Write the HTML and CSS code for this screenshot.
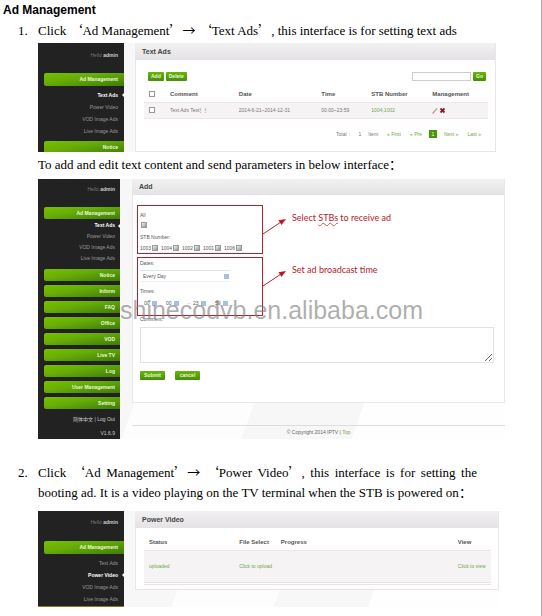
FILE: index.html
```html
<!DOCTYPE html>
<html lang="en">
<head>
    <meta charset="UTF-8">
    <meta name="viewport" content="width=device-width, initial-scale=1.0">
    <title>Ad Management</title>
    <link rel="stylesheet" href="styles.css">
</head>
<body>
    <div class="document">
        <h1>Ad Management</h1>

        <p class="step"><span class="step-number">1.</span>Click <span class="cjk">‘</span>Ad Management<span class="cjk">’→</span> <span class="cjk">‘</span>Text Ads<span class="cjk">’</span>, this interface is for setting text ads</p>

        <!-- Text ads list -->
        <div class="screen screen-list">
            <div class="sidebar">
                <div class="hello">Hello <b>admin</b></div>
                <a href="#" class="menu">Ad Management</a>
                <a href="#" class="sub active">Text Ads</a>
                <a href="#" class="sub">Power Video</a>
                <a href="#" class="sub">VOD Image Ads</a>
                <a href="#" class="sub">Live Image Ads</a>
                <a href="#" class="menu">Notice</a>
            </div>
            <div class="main">
                <div class="panel">
                    <h2>Text Ads</h2>
                    <div class="toolbar">
                        <button class="btn">Add</button>
                        <button class="btn">Delete</button>
                        <input type="text" class="search" aria-label="Search">
                        <button class="btn">Go</button>
                    </div>
                    <table class="ads-table">
                        <tr>
                            <th class="col-check"><input type="checkbox" aria-label="Select all"></th>
                            <th class="col-comment">Comment</th>
                            <th class="col-date">Date</th>
                            <th class="col-time">Time</th>
                            <th class="col-stb">STB Number</th>
                            <th>Management</th>
                        </tr>
                        <tr>
                            <td><input type="checkbox" aria-label="Select ad"></td>
                            <td>Text Ads Test！！</td>
                            <td>2014-6-21~2014-12-31</td>
                            <td>00:00~23:59</td>
                            <td><a href="#">1004,1002</a></td>
                            <td>
                                <svg class="icon" viewBox="0 0 14 7" aria-hidden="true">
                                    <path d="M1 6 L5 1.5" stroke="#d09a78" stroke-width="1.2"/>
                                    <path d="M0.6 6.5 L1.3 5.6" stroke="#777" stroke-width="1"/>
                                    <path d="M8.5 1.5 L12.5 5.5 M12.5 1.5 L8.5 5.5" stroke="#8c1c2c" stroke-width="1.8"/>
                                </svg>
                            </td>
                        </tr>
                    </table>
                    <div class="pager">
                        <span>Total：</span><span>1</span><span>Item</span>
                        <a href="#">« First</a>
                        <a href="#">« Pre</a>
                        <a href="#" class="current">1</a>
                        <a href="#">Next »</a>
                        <a href="#">Last »</a>
                    </div>
                </div>
            </div>
        </div>

        <p class="note">To add and edit text content and send parameters in below interface<span class="cjk">：</span></p>

        <!-- Add form -->
        <div class="screen screen-form">
            <div class="sidebar">
                <div class="hello">Hello <b>admin</b></div>
                <a href="#" class="menu">Ad Management</a>
                <a href="#" class="sub active">Text Ads</a>
                <a href="#" class="sub">Power Video</a>
                <a href="#" class="sub">VOD Image Ads</a>
                <a href="#" class="sub">Live Image Ads</a>
                <a href="#" class="menu">Notice</a>
                <a href="#" class="menu">Inform</a>
                <a href="#" class="menu">FAQ</a>
                <a href="#" class="menu">Office</a>
                <a href="#" class="menu">VOD</a>
                <a href="#" class="menu">Live TV</a>
                <a href="#" class="menu">Log</a>
                <a href="#" class="menu">User Management</a>
                <a href="#" class="menu">Setting</a>
                <div class="logout"><a href="#">简体中文</a> | <a href="#">Log Out</a></div>
                <div class="version">V1.6.9</div>
            </div>
            <div class="main">
                <div class="panel">
                    <h2>Add</h2>
                    <div class="form">
                        <div class="callout">
                            <div class="red-box box-stb">
                                <label for="all">All</label>
                                <input type="checkbox" id="all" checked>
                                <div class="label">STB Number:</div>
                                <div class="stb-list">
                                    <label>1003 <input type="checkbox" checked></label>
                                    <label>1004 <input type="checkbox" checked></label>
                                    <label>1002 <input type="checkbox" checked></label>
                                    <label>1001 <input type="checkbox" checked></label>
                                    <label>1006 <input type="checkbox" checked></label>
                                </div>
                            </div>
                            <svg class="arrow" viewBox="0 0 24 20" aria-hidden="true">
                                <path d="M0 18 L18 6" stroke="#b5202c" stroke-width="1"/>
                                <path d="M23 3 L15.5 4.2 L18.5 9 Z" fill="#c01722"/>
                            </svg>
                            <span class="callout-text">Select <span class="typo">STBs</span> to receive ad</span>
                        </div>
                        <div class="callout">
                            <div class="red-box box-time">
                                <label for="dates">Dates:</label>
                                <select id="dates" class="dates"><option>Every Day</option></select>
                                <div class="label">Times:</div>
                                <div class="times">
                                    <select aria-label="Start hour"><option>00</option></select>
                                    <select aria-label="Start minute"><option>00</option></select>
                                    <span>-</span>
                                    <select aria-label="End hour"><option>23</option></select>
                                    <select aria-label="End minute"><option>59</option></select>
                                </div>
                            </div>
                            <svg class="arrow" viewBox="0 0 24 20" aria-hidden="true">
                                <path d="M0 18 L18 6" stroke="#b5202c" stroke-width="1"/>
                                <path d="M23 3 L15.5 4.2 L18.5 9 Z" fill="#c01722"/>
                            </svg>
                            <span class="callout-text">Set ad broadcast time</span>
                        </div>
                        <label for="comment" class="comment-label">Comment:</label>
                        <textarea id="comment" class="comment"></textarea>
                        <div class="form-buttons">
                            <button class="btn">Submit</button>
                            <button class="btn">cancel</button>
                        </div>
                    </div>
                </div>
                <div class="footer">© Copyright 2014 IPTV | <a href="#">Top</a></div>
            </div>
            <div class="watermark">shinecodvb.en.alibaba.com</div>
        </div>

        <p class="step step-two"><span class="step-number">2.</span>Click <span class="cjk">‘</span>Ad Management<span class="cjk">’→</span> <span class="cjk">‘</span>Power Video<span class="cjk">’</span>, this interface is for setting the booting ad. It is a video playing on the TV terminal when the STB is powered on<span class="cjk">：</span></p>

        <!-- Power video list -->
        <div class="screen screen-video">
            <div class="sidebar">
                <div class="hello">Hello <b>admin</b></div>
                <a href="#" class="menu">Ad Management</a>
                <a href="#" class="sub">Text Ads</a>
                <a href="#" class="sub active">Power Video</a>
                <a href="#" class="sub">VOD Image Ads</a>
                <a href="#" class="sub">Live Image Ads</a>
            </div>
            <div class="main">
                <div class="panel">
                    <h2>Power Video</h2>
                    <table class="video-table">
                        <tr>
                            <th class="col-status">Status</th>
                            <th class="col-file">File Select</th>
                            <th class="col-progress">Progress</th>
                            <th>View</th>
                        </tr>
                        <tr>
                            <td><a href="#">uploaded</a></td>
                            <td><a href="#">Click to upload</a></td>
                            <td></td>
                            <td><a href="#">Click to view</a></td>
                        </tr>
                    </table>
                </div>
            </div>
        </div>
    </div>
</body>
</html>
```

FILE: styles.css
```css
* {
    box-sizing: border-box;
}

body {
    margin: 0;
    background: #fff;
    font-family: "Liberation Sans", Arial, sans-serif;
}

.document {
    min-height: 100vh;
    padding-left: 38px;
    border-right: 1px solid #a8a8b4;
}

h1 {
    margin: 0 0 0 -35px;
    font-size: 12px;
    line-height: 21px;
}

.step,
.note {
    margin: 0;
    font-family: "Liberation Serif", "Times New Roman", serif;
    font-size: 13px;
    line-height: 20px;
}

.step {
    position: relative;
    margin-bottom: 2px;
}

.step-number {
    position: absolute;
    left: -20px;
}

.step-two {
    margin: 24px 64px 8px 0;
    text-align: justify;
}

.note {
    margin: 3px 0 4px;
}

.cjk {
    font-family: "Noto Sans CJK SC", sans-serif;
    line-height: 1;
}

/* App screens */
.screen {
    position: relative;
    display: flex;
    font-size: 6px;
    line-height: 8px;
    color: #777;
    background: #f9f9f9;
}

.screen a {
    color: #74a552;
    text-decoration: none;
}

.screen-list {
    height: 109px;
    margin-right: 45px;
    overflow: hidden;
}

.screen-form {
    margin-right: 36px;
    font-size: 5px;
}

.screen-video {
    height: 96px;
    margin-right: 42px;
}

.sidebar {
    flex: none;
    width: 86px;
    padding-left: 6px;
    background: #222;
    font-size: 5px;
    text-align: right;
}

.screen-video .sidebar {
    border-bottom: 1px solid #8a7a20;
}

.screen-form .sidebar {
    width: 82px;
}

.hello {
    padding: 8px 6px 14px 0;
    color: #777;
}

.hello b {
    color: #ccc;
}

.screen-video .hello {
    padding-top: 7px;
}

.screen-form .hello {
    padding: 6px 5px 14px 0;
}

.screen .menu {
    display: block;
    margin-bottom: 3px;
    padding-right: 6px;
    border-radius: 2px 0 0 2px;
    background: linear-gradient(170deg, #78c000, #67ad08 40%, #3d7d08);
    color: #eaf8d8;
    font-weight: bold;
    line-height: 13px;
}

.screen .sub {
    position: relative;
    display: block;
    padding-right: 6px;
    color: #999;
    line-height: 12px;
}

.screen .sub + .menu {
    margin-top: 4px;
}

.screen .sub.active {
    color: #fff;
    font-weight: bold;
}

.sub.active::after {
    content: "";
    position: absolute;
    top: 4px;
    right: 0;
    border: 2px solid transparent;
    border-right-color: #fff;
    border-left: 0;
}

.screen-video .menu {
    margin-top: 1px;
}

.screen-form .menu {
    margin-bottom: 4px;
    padding-right: 5px;
    line-height: 12px;
}

.screen-form .hello + .menu {
    margin-bottom: 1px;
}

.screen-form .sub {
    padding-right: 5px;
    line-height: 11px;
}

.screen-form .sub + .menu {
    margin-top: 5px;
}

.logout,
.version {
    padding-right: 5px;
    color: #ccc;
    line-height: 12px;
}

.logout {
    font-family: "Liberation Sans", "Noto Sans CJK SC", sans-serif;
}

.version {
    margin-top: 2px;
}

.logout a {
    color: #ccc;
}

.main {
    flex: 1;
    padding-left: 11px;
    background: linear-gradient(110deg, #f7f7f7 20%, #fdfdfd 20%, #fdfdfd 45%, #f8f7f8 45%, #f8f7f8 68%, #fefefe 68%);
}

.panel {
    background: #fff;
    border: 1px solid #e8e6e8;
    border-top: 0;
}

h2 {
    margin: 0 0 0 -1px;
    padding-left: 7px;
    background: linear-gradient(#f2f1f2, #e4e2e4);
    color: #444;
    font-size: 7px;
    line-height: 17px;
}

.btn {
    padding: 0 3px;
    border: 0;
    border-radius: 1px;
    background: linear-gradient(#6cb409, #43900a);
    color: #e8f8d0;
    font: bold 5px/9px "Liberation Sans", Arial, sans-serif;
}

input[type="checkbox"] {
    appearance: none;
    display: block;
    width: 6px;
    height: 6px;
    margin: 0;
    border: 1px solid #999;
    background: #fff;
}

input[type="checkbox"]:checked {
    background: linear-gradient(135deg, #eef3ee, #8a9a8e);
}

/* Text ads list */
.screen-list .panel {
    height: 109px;
}

.toolbar {
    display: flex;
    gap: 2px;
    padding: 12px 9px 0 12px;
}

.search {
    width: 59px;
    height: 9px;
    margin-left: auto;
    padding: 0 2px;
    border: 1px solid #ccc;
    font-size: 6px;
}

table {
    border-collapse: collapse;
    table-layout: fixed;
    color: #777;
}

th,
td {
    padding: 0 0 0 5px;
    text-align: left;
    white-space: nowrap;
}

th {
    color: #555;
}

td {
    font-size: 5px;
}

.ads-table {
    width: calc(100% - 15px);
    margin: 5px 7px 0 8px;
    font-family: "Liberation Sans", "Noto Sans CJK SC", sans-serif;
}

.ads-table th {
    height: 16px;
}

.ads-table td {
    height: 16px;
    background: #f6f3f5;
    border-top: 1px solid #ebe6e9;
    border-bottom: 1px solid #ebe6e9;
}

.col-check {
    width: 21px;
}

.col-comment {
    width: 20%;
}

.col-date {
    width: 24%;
}

.col-time {
    width: 50px;
}

.col-stb {
    width: 61px;
}

.icon {
    display: block;
    width: 14px;
    height: 7px;
    fill: none;
}

.pager {
    display: flex;
    justify-content: flex-end;
    align-items: center;
    gap: 9px;
    margin-top: 11px;
    padding-right: 14px;
    font-size: 5px;
}

.pager span + span {
    margin-left: -2px;
}

.pager .current {
    width: 8px;
    margin: 0 -2px;
    background: #4a970b;
    color: #fff;
    text-align: center;
}

/* Add form */
.screen-form .main {
    padding-left: 12px;
}

.screen-form h2 {
    line-height: 16px;
}

.form {
    display: flex;
    flex-direction: column;
    padding: 10px 10px 22px 4px;
}

.callout {
    display: flex;
    align-items: flex-start;
    margin-bottom: 3px;
}

.red-box {
    flex: none;
    width: 126px;
    border: 1px solid #b5202c;
    padding: 0 2px;
}

.red-box label,
.red-box .label,
.comment-label {
    display: block;
    color: #555;
}

.box-stb {
    height: 49px;
    padding-top: 5px;
}

.box-stb > input[type="checkbox"] {
    margin: 3px 0 5px 1px;
}

.stb-list {
    display: flex;
    gap: 3px;
    padding-top: 3px;
}

.red-box .stb-list label {
    display: flex;
    align-items: center;
    gap: 1px;
    width: 18px;
}

.box-time {
    height: 59px;
    padding-top: 1px;
}

select {
    appearance: none;
    border: 0;
    border-radius: 0;
    background: linear-gradient(#a9bfdc, #a9bfdc) right 1px center / 5px 5px no-repeat;
    color: #555;
    font: 5px/8px "Liberation Sans", Arial, sans-serif;
}

.dates {
    display: block;
    width: 90px;
    height: 12px;
    margin: 3px 0 5px;
    padding-left: 3px;
    border-top: 1px solid #dde3ee;
    border-bottom: 1px solid #eef1f6;
}

.times {
    display: flex;
    gap: 8px;
    padding: 4px 0 0 4px;
}

.times select {
    width: 14px;
    padding: 0;
}

.times span {
    width: 1px;
    margin-right: -4px;
}

.arrow {
    flex: none;
    width: 24px;
    height: 20px;
    margin-top: 11px;
    fill: none;
}

.callout-text {
    margin: 7px 0 0 5px;
    color: #b5202c;
    font-family: Lato, sans-serif;
    font-size: 9px;
    line-height: 12px;
}

.typo {
    text-decoration: underline wavy #c9505a 1px;
}

.comment-label {
    margin: -4px 0 4px 3px;
}

.comment {
    height: 36px;
    margin-left: 3px;
    border: 1px solid #e4e0e4;
    background: #fff;
}

.form-buttons {
    display: flex;
    gap: 10px;
    padding: 8px 0 0 3px;
}

.form-buttons .btn {
    min-width: 25px;
}

.footer {
    margin-top: 22px;
    border-top: 1px solid #ddd;
    color: #666;
    line-height: 12px;
    text-align: center;
}

.watermark {
    position: absolute;
    top: 116px;
    left: 82px;
    color: rgba(120, 120, 120, 0.6);
    font-size: 25px;
    line-height: 30px;
    pointer-events: none;
}

/* Power video */
.screen-video .panel {
    height: 79px;
}

.video-table {
    width: calc(100% - 15px);
    margin: 6px 7px 0 8px;
}

.video-table th {
    height: 16px;
}

.video-table td {
    height: 33px;
    background: #f6f3f5;
    border-top: 1px solid #ebe6e9;
    border-bottom: 3px double #e6e2e5;
}

.col-status {
    width: 26%;
}

.col-file {
    width: 12%;
}

.col-progress {
    width: 51%;
}
```
